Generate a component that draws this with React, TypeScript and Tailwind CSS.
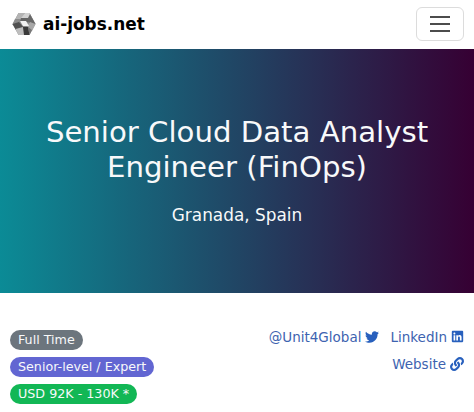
import { FaTwitter, FaLinkedin, FaLink } from "react-icons/fa";

function Logo() {
  return (
    <svg className="block h-[22px] w-[24px]" viewBox="0 0 24 22" aria-hidden="true">
      <path d="M6.5 0H17.5L23.5 11L17.5 22H6.5L0.5 11Z" fill="#8a8a8a" />
      <path d="M6.5 0H13L8 7H3Z" fill="#b4b4b4" />
      <path d="M13 0H17.5L20 5H9Z" fill="#d2d2d2" />
      <path d="M3 6H8L7 12H0.5Z" fill="#8c8c8c" />
      <path d="M9 5H18L16 9H8Z" fill="#666" />
      <path d="M18 1L23.5 11H18L15 7Z" fill="#686868" />
      <path d="M18 9L23.5 11L20 18L15 13Z" fill="#a8a8a8" />
      <path d="M0.5 11L7 9L12 15L4 17Z" fill="#505050" />
      <path d="M8 8L14 8L17 13H11Z" fill="#f2f2f2" />
      <path d="M3.5 16L11 14L13 22H6.5Z" fill="#bebebe" />
      <path d="M11 14H16L17.5 22H12Z" fill="#3a3a3a" />
      <path d="M16 14L20 17L17.5 22Z" fill="#777" />
    </svg>
  );
}

export default function App() {
  return (
    <div className="h-[412px] w-[474px] overflow-hidden bg-white font-['DejaVu_Sans',sans-serif]">
      <header className="flex h-[49px] items-start justify-between pl-[12px] pr-[10px] pt-[7px]">
        <a className="flex h-[34px] items-center gap-[7px] text-[16.9px] font-bold text-black">
          <Logo />
          <span className="leading-[26px]">ai-jobs.net</span>
        </a>
        <button
          aria-label="Menu"
          className="flex h-[34px] w-[48px] flex-col items-center justify-center gap-[5px] rounded-[6px] border border-[#dcdcdc]"
        >
          <span className="h-[2px] w-[20px] bg-[#4c4c4c]" />
          <span className="h-[2px] w-[20px] bg-[#4c4c4c]" />
          <span className="h-[2px] w-[20px] bg-[#4c4c4c]" />
        </button>
      </header>
      <section className="h-[244px] bg-linear-to-r/srgb from-[#0b8b96] to-[#360033] pt-[66px] text-center text-[#f8f9fa]">
        <h1 className="whitespace-nowrap text-[29.2px] leading-[35px]">
          Senior Cloud Data Analyst
          <br />
          Engineer (FinOps)
        </h1>
        <p className="mt-[17px] text-[16.9px] leading-[26px]">Granada, Spain</p>
      </section>
      <main className="flex justify-between pl-[10px] pr-[10px] pt-[37px]">
        <div className="flex flex-col items-start gap-[7px] whitespace-nowrap text-[12.7px] leading-[20px] text-[#f8f9fa]">
          <span className="rounded-full bg-[#6c757d] px-[8px]">Full Time</span>
          <span className="rounded-full bg-[#6266d2] px-[8px]">Senior-level / Expert</span>
          <span className="rounded-full bg-[#12b755] px-[8px]">USD 92K - 130K *</span>
        </div>
        <div className="-mt-[6px] flex flex-col items-end whitespace-nowrap text-[13.5px] leading-[27px] text-[#3d63b0]">
          <div className="flex gap-[11px]">
            <a className="flex items-center gap-[4px]">
              @Unit4Global <FaTwitter className="mb-[2px] size-[14px] text-[#2860bd]" />
            </a>
            <a className="flex items-center gap-[4px]">
              LinkedIn <FaLinkedin className="mb-[2px] size-[13px] text-[#2860bd]" />
            </a>
          </div>
          <a className="flex items-center gap-[4px]">
            Website <FaLink className="mb-[2px] size-[14px] text-[#2860bd]" />
          </a>
        </div>
      </main>
    </div>
  );
}
